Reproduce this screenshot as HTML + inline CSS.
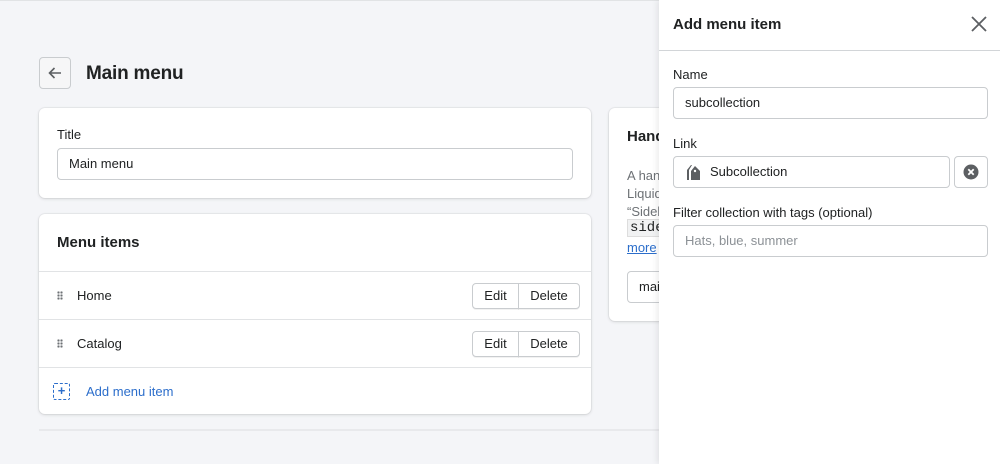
<!DOCTYPE html>
<html><head><style>
*{box-sizing:border-box;margin:0;padding:0}
body{width:1000px;height:464px;overflow:hidden;background:#f4f5f8;font-family:"Liberation Sans",sans-serif;color:#202223;font-size:13px;position:relative}
.a{position:absolute}
.card{position:absolute;background:#fff;border-radius:6px;box-shadow:0 0 0 1px rgba(0,0,0,.04),0 1px 3px rgba(0,0,0,.12)}
.inp{position:absolute;border:1px solid #c9cccf;border-radius:4px;background:#fff;height:32px;line-height:30px;padding-left:11px;font-size:13px}
.btn{position:absolute;border:1px solid #c9cccf;background:#fff;height:26px;line-height:24px;font-size:13px;text-align:center;box-shadow:0 1px 0 rgba(0,0,0,.05)}
.dr{position:absolute;left:57px;width:6px;height:9px;background:radial-gradient(circle,#6d7175 1px,transparent 1.3px) 0 0/3px 3px}
</style></head><body>
<div class="a" style="left:0;top:0;width:1000px;height:1px;background:#e1e3e5"></div>
<div class="a" style="left:39px;top:57px;width:32px;height:32px;border:1px solid #c9cccf;border-radius:4px;background:#f6f6f7"></div>
<svg class="a" style="left:47px;top:65px" width="16" height="16" viewBox="0 0 16 16"><path d="M14 8H2.5M7.5 3L2.5 8l5 5" fill="none" stroke="#5c5f62" stroke-width="1.6"/></svg>
<div class="a" style="left:86px;top:63px;font-size:19px;font-weight:600;letter-spacing:-.2px">Main menu</div>

<div class="card" style="left:39px;top:108px;width:552px;height:90px"></div>
<div class="a" style="left:57px;top:127px">Title</div>
<div class="inp" style="left:57px;top:148px;width:516px">Main menu</div>

<div class="card" style="left:39px;top:214px;width:552px;height:200px"></div>
<div class="a" style="left:57px;top:234px;font-size:15px;font-weight:600">Menu items</div>
<div class="a" style="left:39px;top:271px;width:552px;height:1px;background:#e1e3e5"></div>
<div class="a" style="left:39px;top:319px;width:552px;height:1px;background:#e1e3e5"></div>
<div class="a" style="left:39px;top:367px;width:552px;height:1px;background:#e1e3e5"></div>
<div class="dr" style="top:291px"></div><div class="a" style="left:77px;top:288px">Home</div>
<div class="btn" style="left:472px;top:283px;width:47px;border-radius:4px 0 0 4px">Edit</div>
<div class="btn" style="left:518px;top:283px;width:62px;border-radius:0 4px 4px 0">Delete</div>
<div class="dr" style="top:339px"></div><div class="a" style="left:77px;top:336px">Catalog</div>
<div class="btn" style="left:472px;top:331px;width:47px;border-radius:4px 0 0 4px">Edit</div>
<div class="btn" style="left:518px;top:331px;width:62px;border-radius:0 4px 4px 0">Delete</div>
<div class="a" style="left:53px;top:383px;width:17px;height:17px;border:1.5px dashed #2c6ecb;border-radius:2px;color:#2c6ecb;font-size:13px;line-height:14px;text-align:center;font-weight:bold">+</div>
<div class="a" style="left:86px;top:384px;color:#2c6ecb">Add menu item</div>
<div class="a" style="left:39px;top:429px;width:620px;height:2px;background:#e8e9ec"></div>

<div class="card" style="left:609px;top:108px;width:80px;height:213px"></div>
<div class="a" style="left:627px;top:128px;font-size:15px;font-weight:600">Handle</div>
<div class="a" style="left:627px;top:167px;color:#6d7175;line-height:18px">A handle<br>Liquid<br>“Sidebar</div>
<div class="a" style="left:627px;top:219px;background:#f1f2f3;border:1px solid #ddd;font-family:'Liberation Mono',monospace;font-size:14px;padding:0 2px">sidebar</div>
<div class="a" style="left:627px;top:240px;color:#2c6ecb;text-decoration:underline">more</div>
<div class="inp" style="left:627px;top:271px;width:60px">main</div>

<div class="a" style="left:659px;top:0;width:341px;height:464px;background:#fff;box-shadow:-2px 0 6px rgba(0,0,0,.08)"></div>
<div class="a" style="left:673px;top:16px;font-size:15px;font-weight:600">Add menu item</div>
<svg class="a" style="left:970px;top:15px" width="18" height="18" viewBox="0 0 18 18"><path d="M2 2L16 16M16 2L2 16" stroke="#5c5f62" stroke-width="1.8"/></svg>
<div class="a" style="left:659px;top:50px;width:341px;height:1px;background:#d2d5d8"></div>
<div class="a" style="left:673px;top:67px">Name</div>
<div class="inp" style="left:673px;top:87px;width:315px">subcollection</div>
<div class="a" style="left:673px;top:136px">Link</div>
<div class="inp" style="left:673px;top:156px;width:277px;padding-left:36px">Subcollection</div>
<svg class="a" style="left:684px;top:163px" width="18" height="18" viewBox="0 0 18 18"><path d="M3 17V7l4-5h1L5 7v10z" fill="#5c5f62"/><path d="M7 17V8l4-5 5 5v9z" fill="#5c5f62"/><circle cx="11" cy="8" r="1.2" fill="#fff"/></svg>
<div class="a" style="left:954px;top:156px;width:34px;height:32px;border:1px solid #c9cccf;border-radius:4px"></div>
<svg class="a" style="left:963px;top:164px" width="16" height="16" viewBox="0 0 16 16"><circle cx="8" cy="8" r="7.5" fill="#5c5f62"/><path d="M5.3 5.3l5.4 5.4M10.7 5.3l-5.4 5.4" stroke="#fff" stroke-width="1.8"/></svg>
<div class="a" style="left:673px;top:205px">Filter collection with tags (optional)</div>
<div class="inp" style="left:673px;top:225px;width:315px;color:#8c9196">Hats, blue, summer</div>
</body></html>
